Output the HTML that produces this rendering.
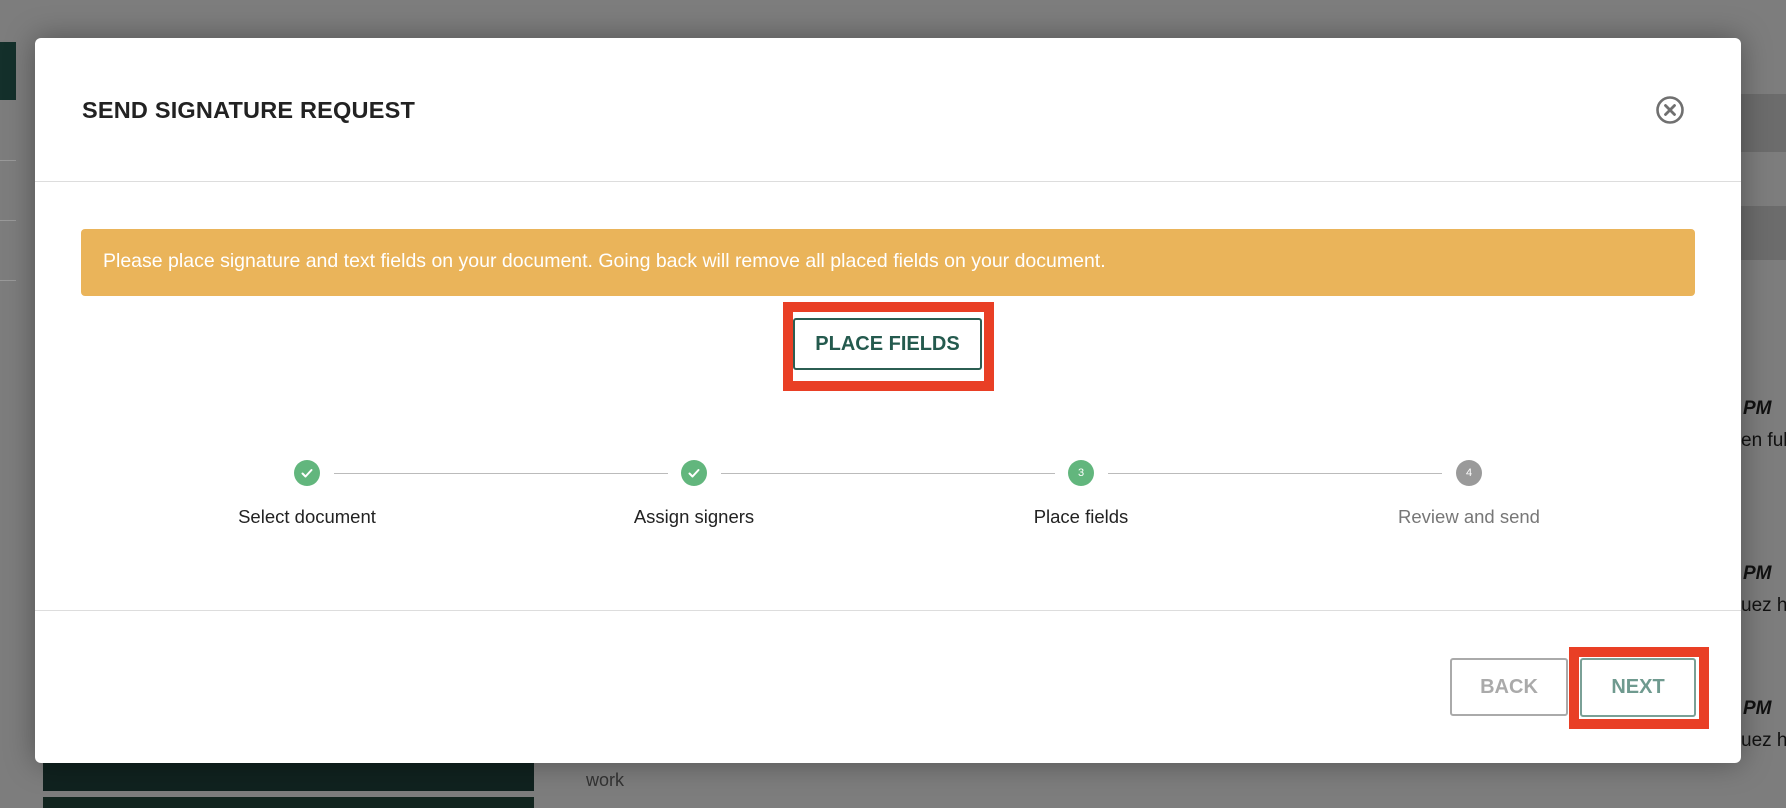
<!DOCTYPE html>
<html><head><meta charset="utf-8"><style>
*{box-sizing:border-box;margin:0;padding:0}
body{width:1786px;height:808px;overflow:hidden;background:#7d7d7d;font-family:"Liberation Sans",sans-serif;position:relative}
.abs{position:absolute;white-space:nowrap}
.modal{left:35px;top:38px;width:1706px;height:725px;background:#fff;border-radius:6px;box-shadow:0 0 30px rgba(0,0,0,.35)}
.title{left:47px;top:59px;font-size:23.5px;font-weight:bold;color:#222;letter-spacing:.2px}
.hr{left:0;width:1706px;height:1px;background:#ddd}
.alert{left:46px;top:191px;width:1614px;height:67px;background:#eab45a;border-radius:4px;color:#fff;font-size:19.5px;line-height:65px;padding-left:22px}
.red{border:10px solid #e93f25}
.btn{border:2px solid #2b5e52;border-radius:3px;color:#245a4e;font-weight:bold;font-size:20px;text-align:center}
.circ{width:26px;height:26px;border-radius:50%;color:#fff;font-size:11px;text-align:center;line-height:26px}
.line{height:1px;background:#bbb;top:435px}
.lbl{font-size:18.5px;color:#222;top:468px;width:300px;text-align:center}
</style></head><body>
<div class="abs" style="left:0;top:42px;width:16px;height:58px;background:#14302b"></div>
<div class="abs" style="left:0;top:160px;width:16px;height:1px;background:#999"></div>
<div class="abs" style="left:0;top:220px;width:16px;height:1px;background:#999"></div>
<div class="abs" style="left:0;top:280px;width:16px;height:1px;background:#999"></div>
<div class="abs" style="left:1741px;top:94px;width:45px;height:58px;background:#6c6c6c"></div>
<div class="abs" style="left:1741px;top:206px;width:45px;height:54px;background:#6c6c6c"></div>
<div class="abs" style="left:1743px;top:398px;font-size:19px;font-weight:bold;font-style:italic;color:#111">PM</div>
<div class="abs" style="left:1741px;top:430px;font-size:19px;color:#111">en ful</div>
<div class="abs" style="left:1743px;top:563px;font-size:19px;font-weight:bold;font-style:italic;color:#111">PM</div>
<div class="abs" style="left:1741px;top:595px;font-size:19px;color:#111">uez ha</div>
<div class="abs" style="left:1743px;top:698px;font-size:19px;font-weight:bold;font-style:italic;color:#111">PM</div>
<div class="abs" style="left:1741px;top:730px;font-size:19px;color:#111">uez ha</div>
<div class="abs" style="left:43px;top:755px;width:491px;height:36px;background:#10221f"></div>
<div class="abs" style="left:43px;top:797px;width:491px;height:11px;background:#12251f"></div>
<div class="abs" style="left:586px;top:770px;font-size:18px;color:#333">work</div>

<div class="abs modal">
  <div class="abs title">SEND SIGNATURE REQUEST</div>
  <svg class="abs" style="left:1620px;top:57px" width="30" height="30" viewBox="0 0 30 30"><circle cx="15" cy="15" r="12.5" fill="none" stroke="#707070" stroke-width="2.6"/><path d="M10.5 10.5L19.5 19.5M19.5 10.5L10.5 19.5" stroke="#707070" stroke-width="2.8" stroke-linecap="round"/></svg>
  <div class="abs hr" style="top:143px"></div>
  <div class="abs alert">Please place signature and text fields on your document. Going back will remove all placed fields on your document.</div>
  <div class="abs red" style="left:748px;top:264px;width:211px;height:89px"></div>
  <div class="abs btn" style="left:758px;top:280px;width:189px;height:52px;line-height:48px">PLACE FIELDS</div>

  <div class="abs circ" style="left:259px;top:422px;background:#62b67d"><svg width="26" height="26" viewBox="0 0 26 26"><path d="M8.5 13.5l3 3 6-6.5" fill="none" stroke="#fff" stroke-width="2" stroke-linecap="round" stroke-linejoin="round"/></svg></div>
  <div class="abs line" style="left:299px;width:334px"></div>
  <div class="abs circ" style="left:646px;top:422px;background:#62b67d"><svg width="26" height="26" viewBox="0 0 26 26"><path d="M8.5 13.5l3 3 6-6.5" fill="none" stroke="#fff" stroke-width="2" stroke-linecap="round" stroke-linejoin="round"/></svg></div>
  <div class="abs line" style="left:686px;width:334px"></div>
  <div class="abs circ" style="left:1033px;top:422px;background:#62b67d">3</div>
  <div class="abs line" style="left:1073px;width:334px"></div>
  <div class="abs circ" style="left:1421px;top:422px;background:#9a9a9a">4</div>
  <div class="abs lbl" style="left:122px">Select document</div>
  <div class="abs lbl" style="left:509px">Assign signers</div>
  <div class="abs lbl" style="left:896px">Place fields</div>
  <div class="abs lbl" style="left:1284px;color:#777">Review and send</div>

  <div class="abs hr" style="top:572px"></div>
  <div class="abs" style="left:1415px;top:620px;width:118px;height:58px;border:2px solid #aaa;border-radius:3px;color:#aaa;font-weight:bold;font-size:20px;text-align:center;line-height:54px">BACK</div>
  <div class="abs red" style="left:1534px;top:609px;width:140px;height:82px"></div>
  <div class="abs" style="left:1545px;top:620px;width:116px;height:59px;border:2px solid #7aa096;border-radius:3px;color:#6f9a8f;font-weight:bold;font-size:20px;text-align:center;line-height:55px">NEXT</div>
</div>
</body></html>
